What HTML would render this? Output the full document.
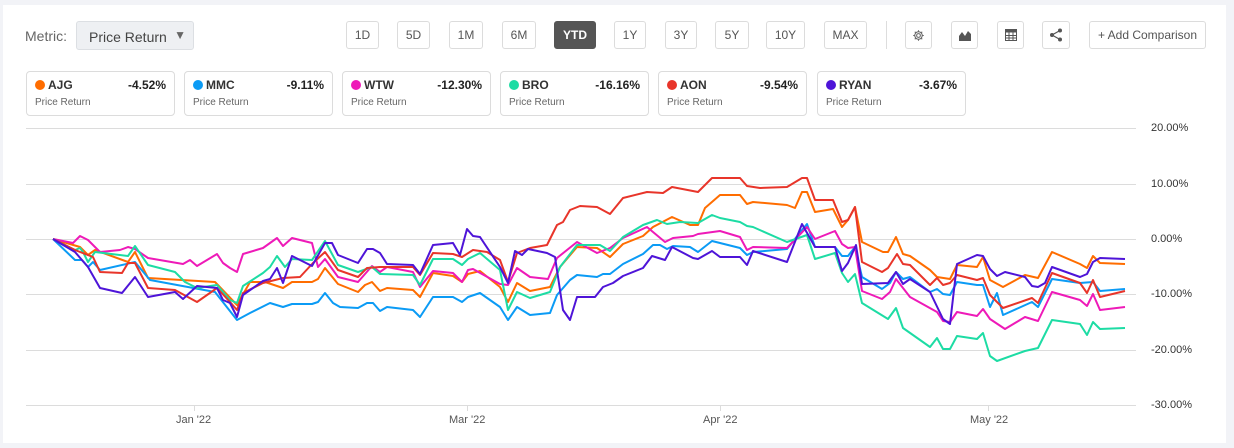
<!DOCTYPE html>
<html><head><meta charset="utf-8"><style>
*{box-sizing:border-box;margin:0;padding:0}
body{width:1234px;height:448px;background:#f2f3f7;font-family:"Liberation Sans",Arial,sans-serif;position:relative;overflow:hidden;color:#333}
.panel{position:absolute;left:3px;top:5px;width:1223px;height:438px;background:#fff}
.abs{position:absolute}
.btn{position:absolute;top:21px;height:28px;border:1px solid #dcdcdc;border-radius:3px;background:#fff;font-size:12px;color:#555;display:flex;align-items:center;justify-content:center}
.card{position:absolute;top:71px;width:149px;height:45px;border:1px solid #dcdcdc;border-radius:4px;background:#fff}
.card .t{position:absolute;left:8px;top:6px;font-size:12px;font-weight:bold;color:#333;display:flex;align-items:center}
.card .t i{display:inline-block;width:10px;height:10px;border-radius:50%;margin-right:3px}
.card .v{position:absolute;right:8px;top:6px;font-size:12px;font-weight:bold;color:#222}
.card .s{position:absolute;left:8px;top:25px;font-size:10px;color:#666}
.yl{position:absolute;left:1151px;font-size:11px;color:#333}
.xl{position:absolute;top:414px;font-size:11px;color:#555}
</style></head><body>
<div class="panel"></div>
<div class="abs" style="left:25px;top:28px;font-size:14px;color:#666">Metric:</div>
<div class="abs" style="left:76px;top:21px;width:118px;height:29px;background:#eef0f3;border:1px solid #dcdfe3;border-radius:3px;font-size:14px;color:#444;padding:7px 0 0 12px">Price Return<span style="position:absolute;right:7px;top:6px;font-size:12px;color:#666">▼</span></div>
<div class="btn" style="left:346px;width:33px">1D</div>
<div class="btn" style="left:397px;width:33px">5D</div>
<div class="btn" style="left:449px;width:34px">1M</div>
<div class="btn" style="left:502px;width:34px">6M</div>
<div class="btn" style="left:554px;width:42px;background:#555;border-color:#555;color:#fff;font-weight:bold">YTD</div>
<div class="btn" style="left:614px;width:32px">1Y</div>
<div class="btn" style="left:665px;width:32px">3Y</div>
<div class="btn" style="left:715px;width:34px">5Y</div>
<div class="btn" style="left:766px;width:39px">10Y</div>
<div class="btn" style="left:824px;width:43px">MAX</div>
<div class="abs" style="left:886px;top:21px;width:1px;height:28px;background:#ddd"></div>
<div class="btn" style="left:905px;width:27px"><svg width="13" height="13" viewBox="0 0 16 16" fill="none" stroke="#666" stroke-width="1.3"><circle cx="8" cy="8" r="2.3"/><path d="M8 1.5v2M8 12.5v2M1.5 8h2M12.5 8h2M3.4 3.4l1.4 1.4M11.2 11.2l1.4 1.4M3.4 12.6l1.4-1.4M11.2 4.8l1.4-1.4"/><circle cx="8" cy="8" r="4.6"/></svg></div>
<div class="btn" style="left:951px;width:27px"><svg width="14" height="12" viewBox="0 0 14 12"><path d="M1 12V7l3-4 3 4 3-5 3 3v7z" fill="#555"/></svg></div>
<div class="btn" style="left:997px;width:27px"><svg width="12" height="12" viewBox="0 0 12 12" fill="none" stroke="#555" stroke-width="1"><rect x="0.5" y="0.5" width="11" height="11"/><rect x="0.5" y="0.5" width="11" height="2.5" fill="#555"/><path d="M0.5 6.5h11M0.5 9h11M4 3v9M8 3v9"/></svg></div>
<div class="btn" style="left:1042px;width:28px"><svg width="14" height="14" viewBox="0 0 14 14"><circle cx="11" cy="2.5" r="2" fill="#555"/><circle cx="3" cy="7" r="2" fill="#555"/><circle cx="11" cy="11.5" r="2" fill="#555"/><path d="M11 2.5L3 7l8 4.5" stroke="#555" stroke-width="1.2" fill="none"/></svg></div>
<div class="btn" style="left:1089px;width:117px">+ Add Comparison</div>

<div class="card" style="left:26px"><div class="t"><i style="background:#ff6d00"></i>AJG</div><div class="v">-4.52%</div><div class="s">Price Return</div></div>
<div class="card" style="left:184px"><div class="t"><i style="background:#0b9bf5"></i>MMC</div><div class="v">-9.11%</div><div class="s">Price Return</div></div>
<div class="card" style="left:342px"><div class="t"><i style="background:#ee1ab8"></i>WTW</div><div class="v">-12.30%</div><div class="s">Price Return</div></div>
<div class="card" style="left:500px"><div class="t"><i style="background:#1ddca4"></i>BRO</div><div class="v">-16.16%</div><div class="s">Price Return</div></div>
<div class="card" style="left:658px"><div class="t"><i style="background:#e8352a"></i>AON</div><div class="v">-9.54%</div><div class="s">Price Return</div></div>
<div class="card" style="left:817px"><div class="t"><i style="background:#4e14d8"></i>RYAN</div><div class="v">-3.67%</div><div class="s">Price Return</div></div>

<svg class="abs" style="left:0;top:0" width="1234" height="448">
<g stroke="#dcdcdc" stroke-width="1">
<path d="M26 128.5H1136M26 184.5H1136M26 239.5H1136M26 294.5H1136M26 350.5H1136M26 405.5H1136"/>
<path d="M194.5 405v6M467.5 405v6M720.5 405v6M988.5 405v6"/>
</g>
<g fill="none" stroke-width="2" stroke-linejoin="round">
<polyline stroke="#ff6d00" points="53,239 80,247 88,255 95,250 128,262 135,252 148,278 215,282 237,305 250,282 265,282 283,288 292,282 312,282 318,279 325,268 338,284 358,292 365,285 372,282 380,291 387,288 413,290 420,297 433,273 453,276 462,282 468,274 480,271 500,287 508,302 517,283 530,291 550,287 560,267 577,247 597,248 610,257 623,244 643,236 653,227 672,217 690,225 698,225 705,208 720,195 740,195 747,204 753,202 787,205 795,208 802,192 807,192 815,212 833,209 842,227 848,220 855,207 862,242 883,252 888,252 896,237 903,254 910,256 930,270 937,277 950,279 957,265 977,267 983,257 990,280 1003,287 1025,275 1038,278 1052,252 1080,264 1087,268 1093,256 1100,263 1125,264"/>
<polyline stroke="#0b9bf5" points="53,239 75,260 82,260 88,267 93,262 100,270 135,262 150,280 215,292 237,320 250,313 270,303 283,307 292,304 312,304 318,302 325,293 333,303 340,307 358,308 367,303 373,303 380,311 387,307 413,310 420,317 433,297 453,297 462,302 468,297 480,293 500,307 508,320 517,307 530,315 550,313 557,295 570,280 577,275 597,277 603,274 610,274 623,264 643,254 653,245 660,245 667,249 673,246 690,247 698,252 712,241 740,248 747,255 753,252 787,249 802,230 807,224 815,247 835,247 842,256 848,256 855,247 862,277 882,289 890,283 896,272 903,279 910,277 930,292 937,289 943,294 950,295 957,282 977,285 983,285 990,307 997,293 1003,315 1032,302 1038,307 1052,279 1080,283 1093,282 1100,291 1125,289"/>
<polyline stroke="#ee1ab8" points="53,239 73,243 80,236 88,240 100,252 120,250 128,247 135,249 148,258 183,264 190,260 197,266 217,254 223,263 230,268 237,272 243,254 263,248 277,238 283,246 292,238 312,243 318,267 325,259 338,277 358,282 372,266 380,272 387,267 413,272 420,287 433,271 453,273 462,282 468,270 473,269 500,284 508,285 517,268 530,277 548,279 557,258 577,242 597,253 610,248 623,238 647,227 665,242 673,238 693,236 698,234 720,231 740,237 747,250 753,247 787,248 807,227 815,239 835,231 842,244 848,248 855,247 862,291 882,299 890,292 896,279 910,297 937,312 943,321 950,322 957,312 977,316 983,309 990,319 1005,329 1025,317 1038,321 1052,292 1080,300 1087,306 1093,294 1100,310 1125,307"/>
<polyline stroke="#1ddca4" points="53,239 75,250 80,248 83,252 88,262 95,252 128,256 135,246 148,265 175,272 185,282 197,288 217,285 230,300 237,303 243,286 263,273 270,267 277,256 285,267 292,259 312,260 325,241 338,265 358,272 372,267 380,274 413,275 420,285 433,259 453,259 462,265 468,259 480,253 500,270 508,310 517,292 530,298 550,292 560,267 577,245 600,245 610,251 623,237 643,225 657,220 667,224 680,222 698,223 712,215 720,218 740,222 747,226 753,227 787,242 807,235 815,259 835,253 842,273 848,282 855,274 862,303 888,319 896,308 903,328 930,347 937,338 943,349 950,349 957,336 977,339 983,333 990,356 997,361 1025,351 1038,348 1052,320 1080,324 1087,335 1093,322 1100,329 1125,328"/>
<polyline stroke="#e8352a" points="53,239 75,250 93,257 100,272 122,273 128,263 135,263 148,288 175,290 197,302 217,288 230,302 237,310 243,293 263,283 283,278 300,277 313,263 325,252 338,270 358,277 367,268 380,267 413,267 420,275 433,253 453,254 462,257 473,250 487,252 500,260 508,282 517,253 530,248 547,245 557,225 563,222 570,210 580,206 597,207 610,214 623,198 647,192 663,193 672,187 698,192 712,178 740,178 747,186 760,188 787,187 802,178 807,178 815,200 833,200 842,222 848,220 855,207 862,262 882,272 888,268 897,254 903,264 910,265 930,285 937,278 943,285 950,283 957,275 977,280 983,278 990,295 1003,308 1032,298 1038,303 1052,273 1080,283 1087,293 1093,280 1100,297 1125,291"/>
<polyline stroke="#4e14d8" points="53,239 75,252 88,267 100,288 122,293 135,277 148,297 175,292 183,299 197,286 217,288 223,300 230,303 237,317 243,295 263,281 270,279 277,268 283,283 292,256 312,266 325,243 332,243 338,255 358,263 367,249 373,249 380,253 387,264 413,265 420,274 433,245 453,243 460,255 467,229 473,236 480,237 500,267 508,283 515,251 522,255 528,249 547,253 555,257 563,310 570,320 577,297 595,297 603,287 613,283 623,276 643,268 652,256 665,260 672,247 693,258 698,259 712,251 720,257 740,257 747,265 753,251 787,262 802,224 815,247 835,247 842,271 848,263 856,245 862,284 888,283 896,272 903,284 910,279 930,292 943,319 950,324 957,264 977,255 983,256 990,269 997,276 1005,272 1025,277 1032,286 1038,287 1045,283 1052,267 1080,277 1087,274 1093,262 1100,258 1125,259"/>
</g>
</svg>
<div class="yl" style="top:122px">20.00%</div>
<div class="yl" style="top:178px">10.00%</div>
<div class="yl" style="top:233px">0.00%</div>
<div class="yl" style="top:288px">-10.00%</div>
<div class="yl" style="top:344px">-20.00%</div>
<div class="yl" style="top:399px">-30.00%</div>
<div class="xl" style="left:176px">Jan '22</div>
<div class="xl" style="left:449px">Mar '22</div>
<div class="xl" style="left:703px">Apr '22</div>
<div class="xl" style="left:970px">May '22</div>
</body></html>
